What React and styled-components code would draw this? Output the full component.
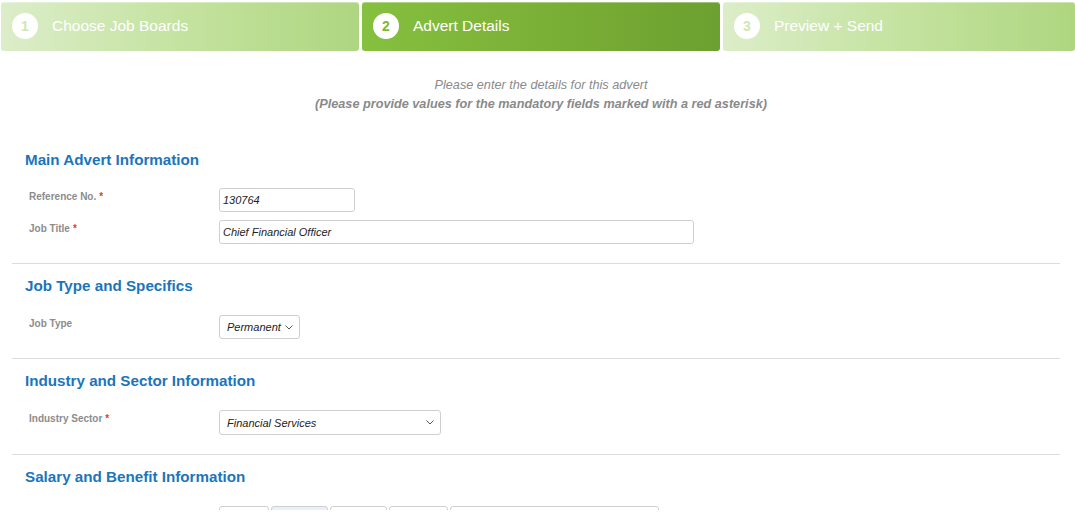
import React from "react";
import styled, { createGlobalStyle } from "styled-components";

const GlobalStyle = createGlobalStyle`
  body {
    margin: 0;
    background: #fff;
    font-family: "Liberation Sans", Arial, sans-serif;
  }
`;

const Page = styled.div`
  height: 510px;
  overflow: hidden;
`;

// Steps ------------------------------------------------------------------

const StepsBar = styled.div`
  display: grid;
  grid-template-columns: 358px 358px 1fr;
  gap: 3px;
  padding: 2px 0 0 1px;
`;

const Step = styled.div`
  height: 49px;
  display: flex;
  align-items: center;
  gap: 14px;
  padding-left: 11px;
  padding-bottom: 1px;
  box-sizing: border-box;
  border-radius: 3px;
  color: #fff;
  font-size: 15.5px;
  background: ${({ $active }) =>
    $active
      ? "linear-gradient(90deg, #86c03f 0%, #78ad35 60%, #6ca030 100%)"
      : "linear-gradient(90deg, #dcedc9 0%, #c4e3a0 50%, #aed680 100%)"};
  box-shadow: inset 0 1px 0 rgba(255, 255, 255, 0.35);
`;

const StepNumber = styled.span`
  width: 26px;
  height: 26px;
  border-radius: 50%;
  background: #fff;
  color: ${({ $active }) => ($active ? "#7db838" : "#cfe7b2")};
  font-weight: bold;
  font-size: 14px;
  display: flex;
  align-items: center;
  justify-content: center;
`;

// Intro ------------------------------------------------------------------

const Intro = styled.div`
  margin-top: 25px;
  padding-left: 7px;
  text-align: center;
  font-size: 12.7px;
  line-height: 19px;
  font-style: italic;
  color: #8a8a8a;

  strong {
    display: block;
  }
`;

// Form -------------------------------------------------------------------

const Form = styled.div`
  margin: 36px 15px 0 12px;
`;

const Section = styled.section`
  padding: ${({ $first }) => ($first ? "0 0 19px" : "12px 0 19px")};
  border-top: ${({ $first }) => ($first ? "none" : "1px solid #dcdcdc")};
`;

const SectionTitle = styled.h2`
  margin: 0 0 ${({ $tight }) => ($tight ? 18 : 19)}px 13px;
  font-size: 15.2px;
  line-height: 20px;
  font-weight: bold;
  color: #1b75bc;
`;

const Row = styled.div`
  display: flex;
  align-items: flex-start;
  padding-left: 17px;

  & + & {
    margin-top: 8px;
  }
`;

const Label = styled.label`
  width: 190px;
  flex: none;
  padding-top: 1px;
  font-size: 10px;
  line-height: 16px;
  font-weight: bold;
  color: #8c8c8c;

  em {
    font-style: normal;
    color: #e53935;
    margin-left: 3px;
  }
`;

const TextInput = styled.div`
  box-sizing: border-box;
  width: ${({ $w }) => $w}px;
  height: ${({ $h }) => $h || 24}px;
  border: 1px solid #cfcfcf;
  border-radius: 3px;
  padding: 0 3px;
  display: flex;
  align-items: center;
  font-size: 11px;
  font-style: italic;
  color: #222;
`;

const SelectBox = styled(TextInput)`
  justify-content: space-between;
  padding: 0 6px 0 7px;

  svg {
    flex: none;
  }
`;

const SplitRow = styled.div`
  display: flex;
  gap: 2px;
`;

const Part = styled.div`
  box-sizing: border-box;
  width: ${({ $w }) => $w}px;
  height: 24px;
  border: 1px solid #cfcfcf;
  border-radius: 3px;
  background: ${({ $tint }) => ($tint ? "#e8f0fe" : "#fff")};
`;

const Chevron = () => (
  <svg width="8" height="5" viewBox="0 0 8 5" fill="none">
    <path d="M0.5 0.5 L4 4 L7.5 0.5" stroke="#555" strokeWidth="1" />
  </svg>
);

const steps = [
  { n: 1, label: "Choose Job Boards" },
  { n: 2, label: "Advert Details", active: true },
  { n: 3, label: "Preview + Send" },
];

export default function App() {
  return (
    <Page>
      <GlobalStyle />
      <StepsBar>
        {steps.map((s) => (
          <Step key={s.n} $active={s.active}>
            <StepNumber $active={s.active}>{s.n}</StepNumber>
            {s.label}
          </Step>
        ))}
      </StepsBar>

      <Intro>
        Please enter the details for this advert
        <strong>(Please provide values for the mandatory fields marked with a red asterisk)</strong>
      </Intro>

      <Form>
        <Section $first>
          <SectionTitle $tight>Main Advert Information</SectionTitle>
          <Row>
            <Label>Reference No.<em>*</em></Label>
            <TextInput $w={136}>130764</TextInput>
          </Row>
          <Row>
            <Label>Job Title<em>*</em></Label>
            <TextInput $w={475}>Chief Financial Officer</TextInput>
          </Row>
        </Section>

        <Section>
          <SectionTitle>Job Type and Specifics</SectionTitle>
          <Row>
            <Label>Job Type</Label>
            <SelectBox $w={81}>
              Permanent <Chevron />
            </SelectBox>
          </Row>
        </Section>

        <Section>
          <SectionTitle>Industry and Sector Information</SectionTitle>
          <Row>
            <Label>Industry Sector<em>*</em></Label>
            <SelectBox $w={222} $h={25}>
              Financial Services <Chevron />
            </SelectBox>
          </Row>
        </Section>

        <Section>
          <SectionTitle>Salary and Benefit Information</SectionTitle>
          <Row>
            <Label>Salary Details</Label>
            <SplitRow>
              <Part $w={50} />
              <Part $w={57} $tint />
              <Part $w={57} />
              <Part $w={59} />
              <Part $w={209} />
            </SplitRow>
          </Row>
        </Section>
      </Form>
    </Page>
  );
}
